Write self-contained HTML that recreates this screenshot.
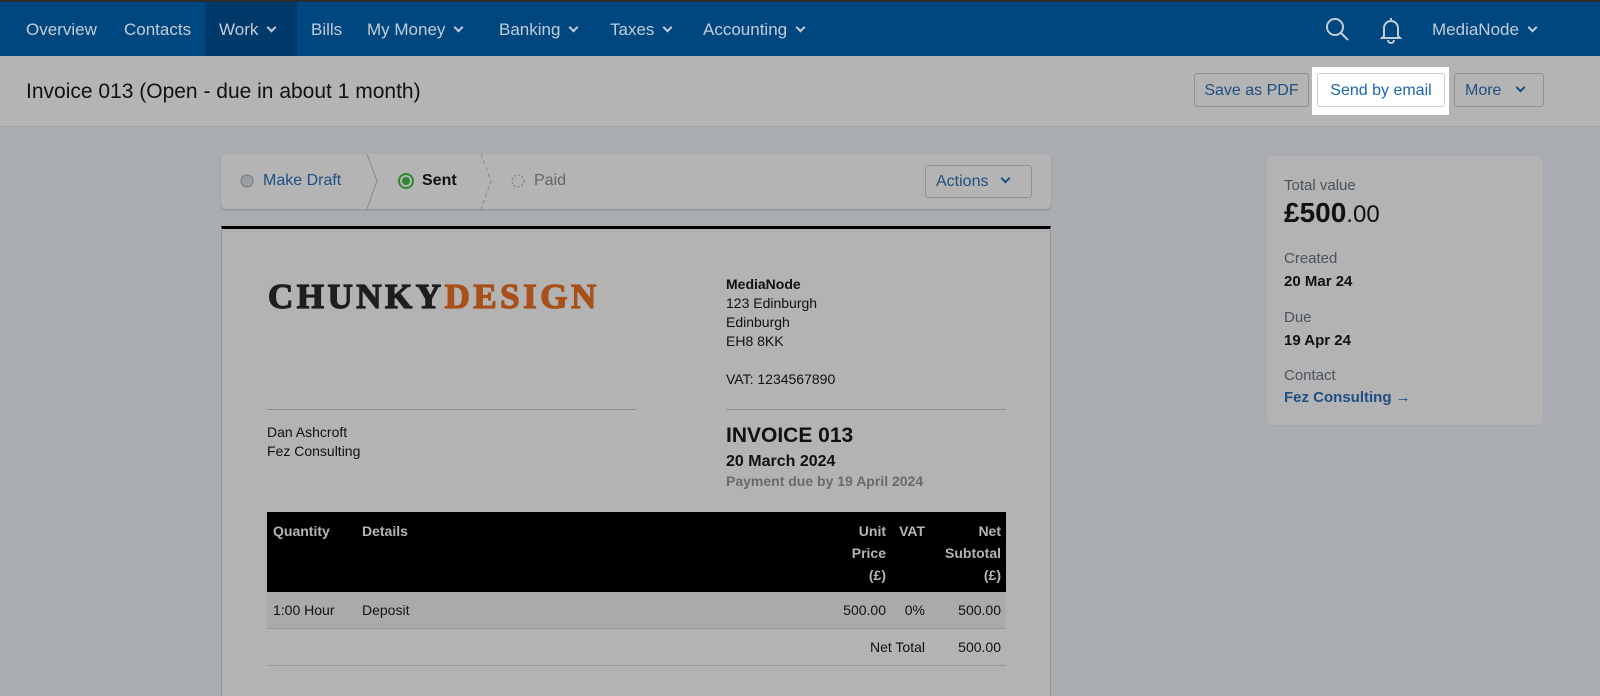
<!DOCTYPE html>
<html><head><meta charset="utf-8"><style>
*{box-sizing:border-box;margin:0;padding:0}
body{width:1600px;height:682px;overflow:hidden;background:#a9adb2;font-family:"Liberation Sans",sans-serif;position:relative}
.top{position:absolute;left:0;top:0;width:1600px;height:2px;background:#2c2c2c}
.nav{position:absolute;top:2px;left:0;width:1600px;height:54px;background:#00477f;color:#c3ccd6;font-size:17px}
.nav span{position:absolute;top:18px}
.chev{display:inline-block;width:7px;height:7px;border-right:2px solid currentColor;border-bottom:2px solid currentColor;transform:rotate(45deg);margin-left:10px;position:relative;top:-4px}
.hdr{position:absolute;top:56px;left:0;width:1600px;height:71px;background:#b4b4b4;border-bottom:1px solid #a3a3a3}
.btn{position:absolute;top:17px;height:34px;border:1px solid #8f9397;border-radius:3px;color:#1f4f80;font-size:16px;padding-top:8px;text-align:center;background:#b4b4b4}
.steps{position:absolute;left:221px;top:154px;width:830px;height:55px;background:#b4b4b4;border-radius:5px;box-shadow:0 1px 2px rgba(0,0,0,.2)}
.paper{position:absolute;left:221px;top:226px;width:830px;height:470px;background:#b3b3b3;border-top:3px solid #000;border-left:1px solid #999;border-right:1px solid #999}
.t{position:absolute;font-size:14px;color:#111;line-height:19px}
.card{position:absolute;left:1266px;top:155px;width:278px;height:271px;background:#b3b3b3;border-radius:7px;border:1px solid #a6a8aa}
.card div{position:absolute;left:17px}
</style></head><body>
<div class="top"></div>
<div class="nav">
<span style="left:26px">Overview</span>
<span style="left:124px">Contacts</span>
<div style="position:absolute;left:205px;top:0;width:92px;height:54px;background:#003a6b"></div>
<span style="left:219px">Work<i class="chev"></i></span>
<span style="left:311px">Bills</span>
<span style="left:367px">My Money<i class="chev"></i></span>
<span style="left:499px">Banking<i class="chev"></i></span>
<span style="left:610px">Taxes<i class="chev"></i></span>
<span style="left:703px">Accounting<i class="chev"></i></span>
<svg style="position:absolute;left:1325px;top:15px" width="26" height="26" viewBox="0 0 26 26" fill="none" stroke="#c3ccd6" stroke-width="2"><circle cx="10" cy="10" r="8"/><path d="M16 16l7 7"/></svg>
<svg style="position:absolute;left:1379px;top:14px" width="24" height="28" viewBox="0 0 24 28" fill="none" stroke="#c3ccd6" stroke-width="2"><path d="M12 2v2M5 20V12a7 7 0 0 1 14 0v8l2 2H3z M9 24a3 3 0 0 0 6 0"/></svg>
<span style="left:1432px">MediaNode<i class="chev"></i></span>
</div>
<div class="hdr">
<div style="position:absolute;left:26px;top:24px;font-size:21px;color:#111">Invoice 013 (Open - due in about 1 month)</div>
<div class="btn" style="left:1194px;width:115px">Save as PDF</div>
<div style="position:absolute;left:1312px;top:11px;width:137px;height:48px;background:#fff"></div>
<div class="btn" style="left:1317px;width:128px;background:#fff;border-color:#ccc;color:#1a64b0">Send by email</div>
<div class="btn" style="left:1454px;width:90px;text-align:left;padding-left:10px">More<i class="chev" style="margin-left:16px"></i></div>
</div>
<div class="steps">
<svg style="position:absolute;left:0;top:0" width="830" height="55"><path d="M146 0l10 27-10 28" fill="none" stroke="#8a8a8a"/><path d="M260 0l10 27-10 28" fill="none" stroke="#8a8a8a" stroke-dasharray="4 3"/>
<circle cx="26" cy="27" r="6" fill="#9a9ea2" stroke="#777"/><circle cx="185" cy="27" r="7" fill="none" stroke="#2f8a2f" stroke-width="2"/><circle cx="185" cy="27" r="4" fill="#2f8a2f"/><circle cx="297" cy="27" r="6" fill="none" stroke="#777" stroke-dasharray="2 2"/></svg>
<div style="position:absolute;left:42px;top:18px;font-size:16px;color:#1d4f86">Make Draft</div>
<div style="position:absolute;left:201px;top:18px;font-size:16px;color:#111;font-weight:bold">Sent</div>
<div style="position:absolute;left:313px;top:18px;font-size:16px;color:#666">Paid</div>
<div class="btn" style="left:704px;top:11px;width:107px;height:33px;padding-top:7px;text-align:left;padding-left:10px">Actions<i class="chev" style="margin-left:14px"></i></div>
</div>
<div class="paper">
<div style="position:absolute;left:46px;top:48px;font-family:'Liberation Serif',serif;font-weight:bold;font-size:35px;letter-spacing:3.5px;color:#1e1e1e;-webkit-text-stroke:1.3px #1e1e1e">CHUNKY<span style="color:#a8501a;-webkit-text-stroke:1.3px #a8501a">DESIGN</span></div>
<div class="t" style="left:504px;top:46px"><b>MediaNode</b><br>123 Edinburgh<br>Edinburgh<br>EH8 8KK<br><br>VAT: 1234567890</div>
<div style="position:absolute;left:45px;top:180px;width:369px;border-top:1px solid #8f8f8f"></div>
<div style="position:absolute;left:504px;top:180px;width:280px;border-top:1px solid #8f8f8f"></div>
<div class="t" style="left:45px;top:194px">Dan Ashcroft<br>Fez Consulting</div>
<div style="position:absolute;left:504px;top:195px;font-size:21px;font-weight:bold;color:#111">INVOICE 013</div>
<div style="position:absolute;left:504px;top:224px;font-size:16px;font-weight:bold;color:#111">20 March 2024</div>
<div style="position:absolute;left:504px;top:244px;font-size:14px;font-weight:bold;color:#6a6a6a">Payment due by 19 April 2024</div>
<div style="position:absolute;left:45px;top:283px;width:739px;height:80px;background:#000;color:#b5b5b5;font-size:14px;font-weight:bold;line-height:22px">
<div style="position:absolute;left:6px;top:8px">Quantity</div>
<div style="position:absolute;left:95px;top:8px">Details</div>
<div style="position:absolute;right:120px;top:8px;text-align:right">Unit<br>Price<br>(£)</div>
<div style="position:absolute;right:81px;top:8px">VAT</div>
<div style="position:absolute;right:5px;top:8px;text-align:right">Net<br>Subtotal<br>(£)</div>
</div>
<div style="position:absolute;left:45px;top:363px;width:739px;height:37px;background:#aaaaaa;border-bottom:1px solid #999;font-size:14px;color:#111">
<div style="position:absolute;left:6px;top:10px">1:00 Hour</div>
<div style="position:absolute;left:95px;top:10px">Deposit</div>
<div style="position:absolute;right:120px;top:10px">500.00</div>
<div style="position:absolute;right:81px;top:10px">0%</div>
<div style="position:absolute;right:5px;top:10px">500.00</div>
</div>
<div style="position:absolute;left:45px;top:400px;width:739px;height:37px;border-bottom:1px solid #999;font-size:14px;color:#111">
<div style="position:absolute;right:81px;top:10px">Net Total</div>
<div style="position:absolute;right:5px;top:10px">500.00</div>
</div>
</div>
<div class="card">
<div style="top:21px;font-size:15px;color:#4a545e">Total value</div>
<div style="top:41px;font-size:28px;font-weight:bold;color:#111">£500<span style="font-weight:normal;font-size:24px">.00</span></div>
<div style="top:94px;font-size:15px;color:#4a545e">Created</div>
<div style="top:117px;font-size:15px;font-weight:bold;color:#111">20 Mar 24</div>
<div style="top:153px;font-size:15px;color:#4a545e">Due</div>
<div style="top:176px;font-size:15px;font-weight:bold;color:#111">19 Apr 24</div>
<div style="top:211px;font-size:15px;color:#4a545e">Contact</div>
<div style="top:233px;font-size:15px;font-weight:bold;color:#1d4f86">Fez Consulting →</div>
</div>
</body></html>
